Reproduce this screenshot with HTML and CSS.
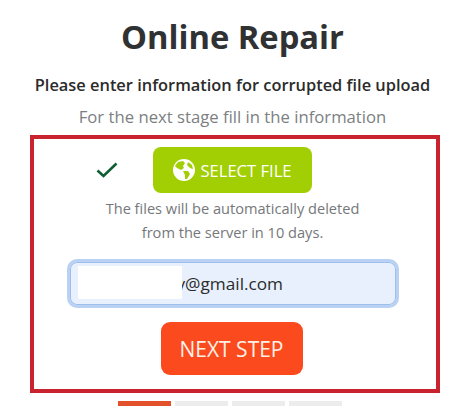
FILE: index.html
```html
<!DOCTYPE html>
<html lang="en">
<head>
	<meta charset="UTF-8">
	<title>Online Repair</title>
	<link rel="stylesheet" href="styles.css">
</head>
<body>
	<div class="page">
		<h1 class="title">Online Repair</h1>
		<div class="lead">Please enter information for corrupted file upload</div>
		<div class="sub">For the next stage fill in the information</div>
		<div class="box">
			<div class="upload-row">
				<svg class="check" width="22" height="16" viewBox="0 0 22 16">
					<path d="M1.5 8.5 L7.5 14 L20.5 1.5" fill="none" stroke="#0f5f32" stroke-width="2.6"/>
				</svg>
				<div class="select-btn">
					<svg class="globe" width="22" height="22" viewBox="0 0 22 22">
						<circle cx="11" cy="11" r="11" fill="#fff"/>
						<path d="M5 3 L10 2 L12 4 L10 7 L11 9 L8 11 L4 9 L2 7 Z" fill="#a2cf04"/>
						<path d="M10 12 L15 12 L17 15 L14 20 L12 20 L12 16 Z" fill="#a2cf04"/>
						<path d="M15 3 L19 6 L20 10 L17 9 L14 6 Z" fill="#a2cf04"/>
					</svg>
					<span>SELECT FILE</span>
				</div>
			</div>
			<div class="note">The files will be automatically deleted<br>from the server in 10 days.</div>
			<div class="email">
				<span class="email-text">y@gmail.com</span>
				<div class="mask"></div>
			</div>
			<div class="next-btn">NEXT STEP</div>
		</div>
		<div class="steps">
			<div class="step active"></div>
			<div class="step"></div>
			<div class="step"></div>
			<div class="step"></div>
		</div>
	</div>
</body>
</html>
```

FILE: styles.css
```css
html, body {
	padding: 0;
	margin: 0;
	background: #fff;
}

.page {
	display: flex;
	flex-direction: column;
	align-items: center;
	width: 465px;
	height: 413px;
	overflow: hidden;
	font-family: "Open Sans", "Noto Sans", sans-serif;
}

.title {
	margin: 14px 0 0;
	font-size: 32.7px;
	line-height: 46px;
	font-weight: 700;
	color: #2f3133;
}

.lead {
	margin-top: 12px;
	font-size: 16.4px;
	line-height: 26px;
	font-weight: 600;
	color: #2b2b2b;
}

.sub {
	margin-top: 6px;
	font-size: 16.7px;
	line-height: 26px;
	color: #7c7f82;
}

.box {
	box-sizing: border-box;
	display: flex;
	flex-direction: column;
	align-items: center;
	width: 410px;
	height: 258px;
	margin-top: 5px;
	margin-left: 5px;
	padding-top: 8px;
	border: 4px solid #c8232f;
}

.upload-row {
	display: flex;
	align-items: center;
	width: 100%;
	height: 46px;
	padding-left: 62px;
	box-sizing: border-box;
}

.check {
	margin-right: 35px;
}

.select-btn {
	display: flex;
	align-items: center;
	justify-content: center;
	gap: 5px;
	width: 159px;
	height: 46px;
	border-radius: 8px;
	background: #a2cf04;
	color: #fff;
	font-size: 16.6px;
}

.note {
	margin-top: 3px;
	margin-right: 5px;
	font-size: 14.6px;
	line-height: 24px;
	text-align: center;
	color: #75787b;
}

.email {
	position: relative;
	box-sizing: border-box;
	width: 332px;
	height: 49px;
	margin-top: 15px;
	margin-left: -5px;
	display: flex;
	align-items: center;
	padding-left: 107px;
	border: 3px solid #b9d2f3;
	border-radius: 10px;
	background: #e8f0fd;
	box-shadow: inset 0 0 0 1px #9dbfea;
	font-size: 17.2px;
	color: #2b2b2b;
}

.mask {
	position: absolute;
	left: 8px;
	top: 4px;
	width: 104px;
	height: 33px;
	background: #fff;
}

.next-btn {
	display: flex;
	align-items: center;
	justify-content: center;
	width: 142px;
	height: 53px;
	margin-top: 14px;
	margin-left: -7px;
	border-radius: 9px;
	background: #fb4b1e;
	color: #fdf0e6;
	font-size: 21px;
}

.steps {
	display: flex;
	gap: 4px;
	margin-top: 8px;
	margin-right: 5px;
}

.step {
	width: 53px;
	height: 5px;
	background: #ececec;
}

.step.active {
	background: #e2512a;
}
```
